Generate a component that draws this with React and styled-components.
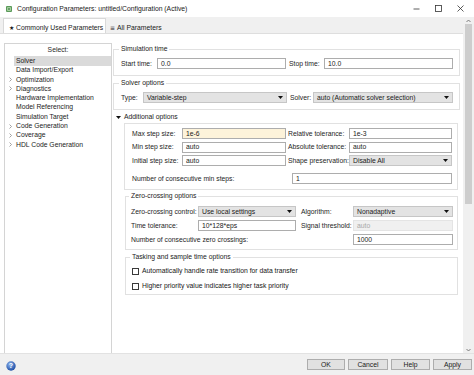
import React from 'react';
import styled, { createGlobalStyle } from 'styled-components';

const GlobalStyle = createGlobalStyle`
  html, body {
    margin: 0;
    padding: 0;
    background: #fff;
  }
  * {
    box-sizing: border-box;
  }
`;

const Window = styled.div`
  width: 474px;
  height: 375px;
  display: flex;
  flex-direction: column;
  overflow: hidden;
  background: #fff;
  color: #161616;
  font-family: "Liberation Sans", Arial, sans-serif;
  font-size: 6.8px;
  line-height: 8px;
`;

const TitleBar = styled.div`
  height: 17px;
  flex: none;
  display: flex;
  align-items: center;
  padding-left: 6px;
`;

const TitleText = styled.div`
  flex: 1;
  margin-left: 5px;
  color: #202020;
`;

const WinControls = styled.div`
  display: flex;
  margin-right: 3px;
`;

const WinButton = styled.div`
  width: 22px;
  height: 17px;
  display: flex;
  align-items: center;
  justify-content: center;
`;

const Body = styled.div`
  flex: 1;
  display: flex;
  min-height: 0;
`;

const Main = styled.div`
  flex: 1;
  display: flex;
  flex-direction: column;
  min-width: 0;
`;

const TabBar = styled.div`
  height: 16px;
  flex: none;
  display: flex;
  align-items: flex-end;
  padding-left: 3px;
  background: #f0f0f0;
`;

const Tab = styled.div`
  width: ${p => p.$w}px;
  height: 15px;
  display: flex;
  align-items: center;
  gap: 2px;
  padding: 3px 0 0 ${p => p.$active ? 5 : 3}px;
  background: ${p => p.$active ? '#fff' : 'transparent'};
  border: 1px solid ${p => p.$active ? '#d9d9d9' : 'transparent'};
  border-bottom: none;
  color: #1a1a1a;
`;

const TabIcon = styled.span`
  width: 5px;
  font-size: 6px;
  text-align: center;
  font-family: "DejaVu Sans", sans-serif;
`;

const Content = styled.div`
  flex: 1;
  display: flex;
  min-height: 0;
  background: #fff;
  border-top: 1px solid #dedede;
`;

const Sidebar = styled.div`
  width: 108px;
  flex: none;
  margin: 9px 1px 0 4px;
  border: 1px solid #d4d4d4;
  border-bottom: none;
`;

const SelectHead = styled.div`
  height: 10px;
  padding-top: 2px;
  margin-bottom: 2.3px;
  text-align: center;
  color: #2a2a2a;
`;

const TreeItem = styled.div`
  height: 9.3px;
  display: flex;
  align-items: center;
`;

const Caret = styled.span`
  width: 9px;
  height: 9.3px;
  flex: none;
  display: flex;
  align-items: center;
  padding-left: 4px;
`;

const TreeLabel = styled.span`
  flex: 1;
  height: 9.3px;
  display: flex;
  align-items: center;
  padding-left: 2px;
  background: ${p => p.$selected ? '#dadada' : 'transparent'};
  color: #1c1c1c;
`;

const Panel = styled.div`
  flex: 1;
  min-width: 0;
  display: flex;
  flex-direction: column;
`;

const Group = styled.fieldset`
  margin: ${p => p.$mt}px ${p => p.$mr}px 0 ${p => p.$ml}px;
  padding: ${p => p.$pt}px 0 ${p => p.$pb}px ${p => p.$pl}px;
  border: 1px solid #e1e1e1;
  min-width: 0;
`;

const Legend = styled.legend`
  padding: 0 2px;
  margin-left: -2px;
  line-height: 8px;
  color: #222;
`;

const Box = styled.div`
  margin: ${p => p.$mt}px ${p => p.$mr}px 0 ${p => p.$ml}px;
  padding: ${p => p.$pt}px 0 ${p => p.$pb}px ${p => p.$pl}px;
  border: 1px solid #e1e1e1;
`;

const Toggle = styled.div`
  height: 8px;
  margin-top: 3px;
  display: flex;
  align-items: center;
  padding-left: 3px;
  gap: 3px;
  color: #222;
`;

const Row = styled.div`
  display: flex;
  align-items: center;
  height: ${p => p.$h || 11}px;
  margin-top: ${p => p.$mt || 0}px;
`;

const Label = styled.span`
  width: ${p => p.$w}px;
  margin-left: ${p => p.$ml || 0}px;
  flex: none;
  white-space: nowrap;
  color: #1e1e1e;
`;

const Field = styled.div`
  width: ${p => p.$w}px;
  height: 11px;
  flex: none;
  display: flex;
  align-items: center;
  padding-left: 3px;
  background: ${p => p.$bg || '#fff'};
  border: 1px solid ${p => p.$disabled ? '#e4e4e4' : '#adadad'};
  color: ${p => p.$disabled ? '#a8a8a8' : '#1a1a1a'};
  white-space: nowrap;
`;

const Select = styled.div`
  width: ${p => p.$w}px;
  height: 11px;
  flex: none;
  display: flex;
  align-items: center;
  justify-content: space-between;
  padding: 0 3px 0 3px;
  background: #e3e3e3;
  border: 1px solid #c6c6c6;
  color: #1a1a1a;
  white-space: nowrap;
`;

const Check = styled.span`
  width: 7px;
  height: 7px;
  flex: none;
  border: 1px solid #3a3a3a;
  background: #fff;
  margin-right: 3px;
`;

const Scrollbar = styled.div`
  width: 11px;
  flex: none;
  display: flex;
  flex-direction: column;
  align-items: center;
  background: #f0f0f0;
`;

const ScrollArrow = styled.div`
  height: 6px;
  display: flex;
  align-items: center;
  justify-content: center;
  margin-top: ${p => p.$mt || 0}px;
`;

const Thumb = styled.div`
  width: 7px;
  height: 180px;
  background: #cdcdcd;
`;

const Footer = styled.div`
  height: 22px;
  flex: none;
  display: flex;
  align-items: center;
  padding: 0 2px 0 6px;
  background: #f0f0f0;
  border-top: 1px solid #e2e2e2;
`;

const HelpIcon = styled.div`
  flex: 1;
  display: flex;
  margin-top: 3px;
`;

const Button = styled.div`
  width: ${p => p.$w}px;
  height: 11px;
  margin-left: ${p => p.$ml}px;
  display: flex;
  align-items: center;
  justify-content: center;
  background: #e1e1e1;
  border: 1px solid #adadad;
  color: #1a1a1a;
`;

const DropArrow = () => (
  <svg width="5" height="3" viewBox="0 0 5 3"><path d="M0 0 H5 L2.5 3 Z" fill="#111" /></svg>
);

const TreeCaret = () => (
  <svg width="3" height="5" viewBox="0 0 3 5"><path d="M0.5 0.5 L2.5 2.5 L0.5 4.5" fill="none" stroke="#8a8a8a" strokeWidth="0.8" /></svg>
);

const tree = [
  { name: 'Solver', selected: true },
  { name: 'Data Import/Export' },
  { name: 'Optimization', caret: true },
  { name: 'Diagnostics', caret: true },
  { name: 'Hardware Implementation' },
  { name: 'Model Referencing' },
  { name: 'Simulation Target' },
  { name: 'Code Generation', caret: true },
  { name: 'Coverage', caret: true },
  { name: 'HDL Code Generation', caret: true },
];

export default function App() {
  return (
    <Window>
      <GlobalStyle />
      <TitleBar>
        <svg width="6" height="6" viewBox="0 0 6 6">
          <rect x="0" y="0" width="6" height="6" rx="1" fill="#5a9a5a" />
          <rect x="1.2" y="1.2" width="3.6" height="3.6" fill="#b9dcb0" />
          <rect x="2.2" y="2.2" width="1.6" height="1.6" fill="#3f7d46" />
        </svg>
        <TitleText>Configuration Parameters: untitled/Configuration (Active)</TitleText>
        <WinControls>
          <WinButton>
            <svg width="7" height="7" viewBox="0 0 7 7"><path d="M0.5 4 H6.5" stroke="#333" strokeWidth="0.8" /></svg>
          </WinButton>
          <WinButton>
            <svg width="7" height="7" viewBox="0 0 7 7"><rect x="0.5" y="0.5" width="6" height="6" fill="none" stroke="#333" strokeWidth="0.8" /></svg>
          </WinButton>
          <WinButton>
            <svg width="7" height="7" viewBox="0 0 7 7"><path d="M0.5 0.5 L6.5 6.5 M6.5 0.5 L0.5 6.5" stroke="#333" strokeWidth="0.8" /></svg>
          </WinButton>
        </WinControls>
      </TitleBar>

      <Body>
        <Main>
          <TabBar>
            <Tab $active $w={103}>
              <TabIcon>★</TabIcon>
              <span>Commonly Used Parameters</span>
            </Tab>
            <Tab $w={60}>
              <TabIcon>≡</TabIcon>
              <span>All Parameters</span>
            </Tab>
          </TabBar>

          <Content>
            <Sidebar>
              <SelectHead>Select:</SelectHead>
              {tree.map(item => (
                <TreeItem key={item.name}>
                  <Caret>{item.caret ? <TreeCaret /> : null}</Caret>
                  <TreeLabel $selected={item.selected}>{item.name}</TreeLabel>
                </TreeItem>
              ))}
            </Sidebar>

            <Panel>
              <Group $mt={11} $mr={3} $ml={0} $pt={5} $pb={6} $pl={7}>
                <Legend>Simulation time</Legend>
                <Row>
                  <Label $w={36}>Start time:</Label>
                  <Field $w={129}>0.0</Field>
                  <Label $w={35} $ml={3}>Stop time:</Label>
                  <Field $w={129}>10.0</Field>
                </Row>
              </Group>

              <Group $mt={3} $mr={3} $ml={0} $pt={5} $pb={6} $pl={7}>
                <Legend>Solver options</Legend>
                <Row>
                  <Label $w={22}>Type:</Label>
                  <Select $w={144}>Variable-step<DropArrow /></Select>
                  <Label $w={23} $ml={3}>Solver:</Label>
                  <Select $w={140}>auto (Automatic solver selection)<DropArrow /></Select>
                </Row>
              </Group>

              <Toggle>
                <DropArrow />
                <span>Additional options</span>
              </Toggle>

              <Box $mt={2} $mr={5} $ml={11} $pt={4} $pb={5} $pl={7}>
                <Row>
                  <Label $w={50}>Max step size:</Label>
                  <Field $w={104} $bg="#fdf3da">1e-6</Field>
                  <Label $w={61} $ml={2}>Relative tolerance:</Label>
                  <Field $w={103}>1e-3</Field>
                </Row>
                <Row $mt={2.5}>
                  <Label $w={50}>Min step size:</Label>
                  <Field $w={104}>auto</Field>
                  <Label $w={61} $ml={2}>Absolute tolerance:</Label>
                  <Field $w={103}>auto</Field>
                </Row>
                <Row $mt={2.5}>
                  <Label $w={50}>Initial step size:</Label>
                  <Field $w={104}>auto</Field>
                  <Label $w={61} $ml={2}>Shape preservation:</Label>
                  <Select $w={103}>Disable All<DropArrow /></Select>
                </Row>
                <Row $mt={7}>
                  <Label $w={160}>Number of consecutive min steps:</Label>
                  <Field $w={160}>1</Field>
                </Row>
              </Box>

              <Group $mt={2} $mr={5} $ml={12} $pt={6} $pb={4} $pl={5}>
                <Legend>Zero-crossing options</Legend>
                <Row>
                  <Label $w={67}>Zero-crossing control:</Label>
                  <Select $w={98}>Use local settings<DropArrow /></Select>
                  <Label $w={52} $ml={5}>Algorithm:</Label>
                  <Select $w={100}>Nonadaptive<DropArrow /></Select>
                </Row>
                <Row $mt={3}>
                  <Label $w={67}>Time tolerance:</Label>
                  <Field $w={98}>10*128*eps</Field>
                  <Label $w={52} $ml={5}>Signal threshold:</Label>
                  <Field $w={100} $bg="#f0f0f0" $disabled>auto</Field>
                </Row>
                <Row $mt={3}>
                  <Label $w={222}>Number of consecutive zero crossings:</Label>
                  <Field $w={100}>1000</Field>
                </Row>
              </Group>

              <Group $mt={3} $mr={5} $ml={12} $pt={6} $pb={4} $pl={6}>
                <Legend>Tasking and sample time options</Legend>
                <Row $h={8}>
                  <Check />
                  <span>Automatically handle rate transition for data transfer</span>
                </Row>
                <Row $h={8} $mt={7}>
                  <Check />
                  <span>Higher priority value indicates higher task priority</span>
                </Row>
              </Group>
            </Panel>
          </Content>
        </Main>

        <Scrollbar>
          <ScrollArrow $mt={1}>
            <svg width="5" height="4" viewBox="0 0 5 4"><path d="M0.5 3 L2.5 1 L4.5 3" fill="none" stroke="#606060" strokeWidth="0.8" /></svg>
          </ScrollArrow>
          <Thumb />
          <ScrollArrow $mt={143}>
            <svg width="5" height="4" viewBox="0 0 5 4"><path d="M0.5 1 L2.5 3 L4.5 1" fill="none" stroke="#606060" strokeWidth="0.8" /></svg>
          </ScrollArrow>
        </Scrollbar>
      </Body>

      <Footer>
        <HelpIcon>
          <svg width="10" height="10" viewBox="0 0 10 10">
            <defs>
              <radialGradient id="hg" cx="0.4" cy="0.35" r="0.65">
                <stop offset="0" stopColor="#8fb6ef" />
                <stop offset="1" stopColor="#1f4fa6" />
              </radialGradient>
            </defs>
            <circle cx="5" cy="5" r="4.7" fill="url(#hg)" />
            <text x="5" y="7.4" textAnchor="middle" fontSize="7" fontWeight="bold" fill="#fff" fontFamily="Liberation Sans, sans-serif">?</text>
          </svg>
        </HelpIcon>
        <Button $w={38} $ml={0}>OK</Button>
        <Button $w={40} $ml={3}>Cancel</Button>
        <Button $w={39} $ml={3}>Help</Button>
        <Button $w={39} $ml={3}>Apply</Button>
      </Footer>
    </Window>
  );
}
